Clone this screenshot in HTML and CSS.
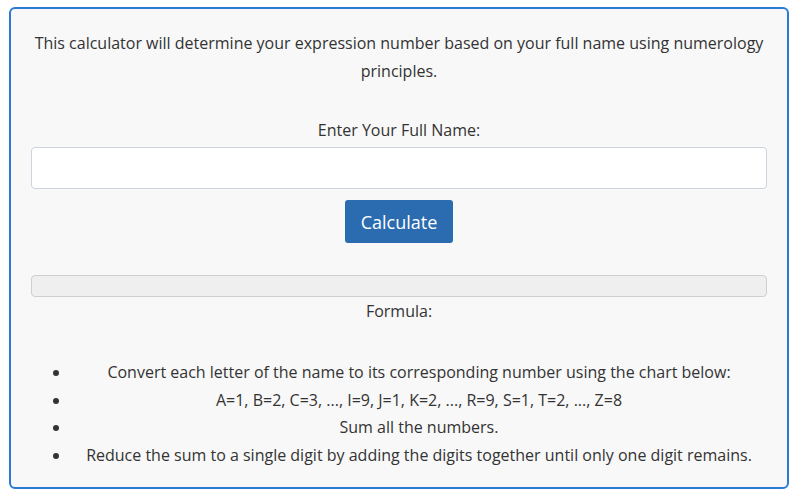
FILE: index.html
```html
<!DOCTYPE html>
<html lang="en">
<head>
<meta charset="utf-8">
<title>Expression Number Calculator</title>
<link rel="stylesheet" href="styles.css">
</head>
<body>
<div class="calc">
  <p class="intro">This calculator will determine your expression number based on your full name using numerology principles.</p>
  <label class="label" for="fullname">Enter Your Full Name:</label>
  <input class="name-input" id="fullname" type="text">
  <div class="actions">
    <button class="btn" type="button">Calculate</button>
  </div>
  <div class="result"></div>
  <p class="formula-title">Formula:</p>
  <ul class="steps">
    <li>Convert each letter of the name to its corresponding number using the chart below:</li>
    <li>A=1, B=2, C=3, ..., I=9, J=1, K=2, ..., R=9, S=1, T=2, ..., Z=8</li>
    <li>Sum all the numbers.</li>
    <li>Reduce the sum to a single digit by adding the digits together until only one digit remains.</li>
  </ul>
</div>
</body>
</html>
```

FILE: styles.css
```css
html, body {
  margin: 0;
  padding: 0;
  background: #ffffff;
}

body {
  font-family: "Open Sans", "Noto Sans", sans-serif;
  font-size: 16px;
  color: #333333;
}

.calc {
  margin: 7px 7px 0 9px;
  height: 482px;
  box-sizing: border-box;
  border: 2px solid #2b7bd2;
  border-radius: 6px;
  background: #f8f8f8;
  padding: 20px 20px 16px;
  text-align: center;
}

.intro {
  margin: 0;
  line-height: 28px;
}

.label {
  display: block;
  margin-top: 31px;
  line-height: 28px;
}

.name-input {
  display: block;
  margin-top: 3px;
  height: 42px;
  box-sizing: border-box;
  border: 1px solid #cdd3da;
  border-radius: 4px;
  background: #ffffff;
  width: 100%;
}

.actions {
  display: flex;
  justify-content: center;
  margin-top: 11px;
}

.btn {
  width: 108px;
  height: 43px;
  border: 0;
  border-radius: 3px;
  background: #2b6cb0;
  color: #ffffff;
  font-family: inherit;
  font-size: 18px;
  padding: 0;
}

.result {
  margin-top: 32px;
  height: 22px;
  box-sizing: border-box;
  border: 1px solid #cfcfcf;
  border-radius: 4px;
  background: #efefef;
}

.formula-title {
  margin: 0;
  line-height: 28px;
}

.steps {
  margin: 34px 0 0 0;
  padding-left: 40px;
  line-height: 27.6px;
}
```
